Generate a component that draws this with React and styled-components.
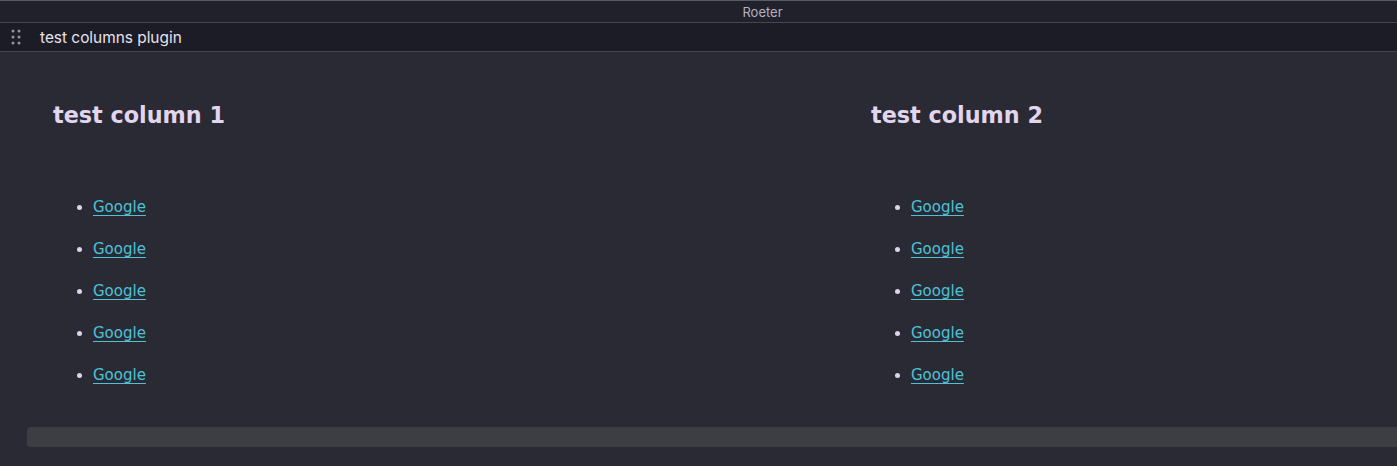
import React from "react";
import styled, { createGlobalStyle } from "styled-components";

const Global = createGlobalStyle`
  html, body { margin: 0; padding: 0; background: #2a2a35; overflow: hidden; }
  body { width: 1397px; height: 466px; }
`;

const Window = styled.div`
  width: 1397px;
  height: 466px;
  display: flex;
  flex-direction: column;
  background: #2a2a35;
  overflow: hidden;
  border-top: 1px solid #5a5a64;
`;

const TitleBar = styled.div`
  height: 21px;
  background: #21212c;
  border-bottom: 1px solid #46464f;
  display: flex;
  align-items: center;
  justify-content: center;
  padding-left: 128px;
  font-family: "Inter", "Liberation Sans", sans-serif;
  font-size: 13px;
  color: #b4b0c2;
  flex-shrink: 0;
`;

const Header = styled.div`
  height: 28px;
  background: #1c1c27;
  border-bottom: 1px solid #45454e;
  display: flex;
  align-items: center;
  gap: 18px;
  padding-left: 10px;
  font-family: "Inter", "Liberation Sans", sans-serif;
  font-size: 15.4px;
  color: #e6e2ee;
  flex-shrink: 0;
`;

const Handle = styled.svg`
  width: 12px;
  height: 18px;
  display: block;
`;

const Content = styled.div`
  flex: 1;
  display: flex;
  flex-direction: column;
  padding-left: 27px;
`;

const Columns = styled.div`
  display: grid;
  grid-template-columns: 818px 818px;
  padding-top: 49px;
`;

const Column = styled.div`
  padding-left: 26px;
`;

const Heading = styled.h2`
  margin: 0;
  font-family: "DejaVu Sans", sans-serif;
  font-weight: bold;
  font-size: 22.3px;
  line-height: 28px;
  color: #e2d6ee;
`;

const List = styled.ul`
  margin: 68px 0 0 0;
  padding-left: 40px;
  list-style: disc;
  color: #ddd3ea;
  font-family: "DejaVu Sans", sans-serif;
  font-size: 15px;
`;

const Item = styled.li`
  line-height: 20px;
  margin-bottom: 22px;
`;

const Link = styled.a`
  color: #4cc2d6;
  text-decoration: underline;
  text-underline-offset: 3px;
  text-decoration-thickness: 1px;
`;

const BottomBar = styled.div`
  margin-top: 20px;
  height: 20px;
  background: #3d3e44;
  border-radius: 4px 0 0 4px;
`;

const columns = ["test column 1", "test column 2"];

export default function App() {
  return (
    <>
      <Global />
      <Window>
        <TitleBar>Roeter</TitleBar>
        <Header>
          <Handle viewBox="0 0 12 18">
            {[0, 1, 2].map((r) =>
              [0, 1].map((c) => (
                <circle key={`${r}-${c}`} cx={3 + c * 6} cy={3 + r * 6} r="1.5" fill="#9391a3" />
              ))
            )}
          </Handle>
          <span>test columns plugin</span>
        </Header>
        <Content>
          <Columns>
            {columns.map((title) => (
              <Column key={title}>
                <Heading>{title}</Heading>
                <List>
                  {[0, 1, 2, 3, 4].map((i) => (
                    <Item key={i}>
                      <Link href="#">Google</Link>
                    </Item>
                  ))}
                </List>
              </Column>
            ))}
          </Columns>
          <BottomBar />
        </Content>
      </Window>
    </>
  );
}
